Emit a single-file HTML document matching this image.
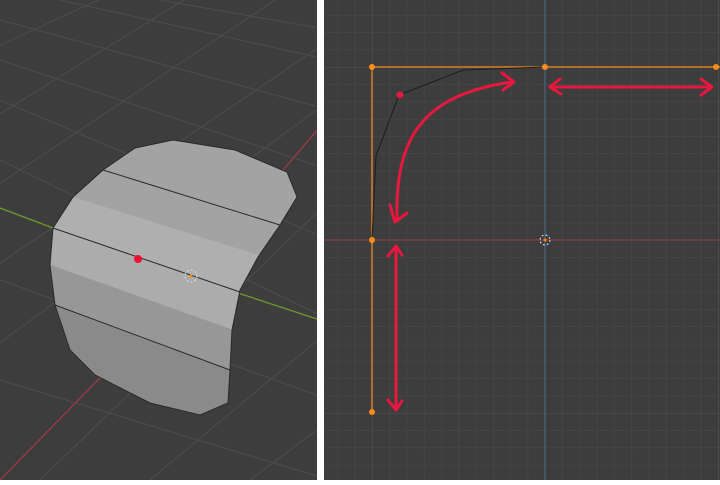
<!DOCTYPE html>
<html><head><style>body{margin:0;width:720px;height:480px;overflow:hidden;background:#fff}</style></head><body>
<svg width="720" height="480" xmlns="http://www.w3.org/2000/svg">
<defs>
<pattern id="mn" x="545" y="240" width="17.3" height="17.3" patternUnits="userSpaceOnUse"><path d="M0 0H17.3M0 0V17.3" stroke="#4a4a4a" stroke-width="1" fill="none"/></pattern>
<pattern id="mj" x="545" y="240" width="173" height="173" patternUnits="userSpaceOnUse"><path d="M0 0H173M0 0V173" stroke="#545454" stroke-width="1" fill="none"/></pattern>
<clipPath id="L"><rect x="0" y="0" width="317" height="480"/></clipPath>
<clipPath id="M"><polygon points="173,140 135,148 103,170 73,197 53,228 50,265 55,305 70,350 95,375 150,403 200,415 228,403 230,370 232,330 240,290 258,257 280,225 297,197 287,172 235,150"/></clipPath>
</defs>
<rect x="0" y="0" width="317" height="480" fill="#3d3d3d"/>
<g clip-path="url(#L)" stroke="#4b4b4b" stroke-width="1.2">
<path d="M-10 50L120 -10M-10 120L200 -10M-10 190L290 -10M-10 270L330 40M-10 350L330 100M40 480L330 200M150 480L330 330M250 480L330 420"/>
<path d="M0 20L330 110M0 60L330 170M0 100L330 240M0 160L330 320M0 280L330 400M0 380L330 480M60 0L330 60M160 0L330 30"/>
<path d="M0 480L140 337M283 170L320 127" stroke="#a23a44" stroke-width="1.3"/>
<path d="M0 208L53 228M238 293L320 320" stroke="#6a9a2a" stroke-width="1.3"/>
<g clip-path="url(#M)" stroke="none">
<rect x="0" y="100" width="320" height="340" fill="#8a8a8a"/>
<polygon points="0,100 320,100 320,274 0,174" fill="#a3a3a3"/>
<polygon points="0,174 320,274 320,320 0,210" fill="#afafaf"/>
<polygon points="0,210 320,320 320,361 0,247" fill="#acacac"/>
<polygon points="0,247 320,361 320,404 0,285" fill="#979797"/>
</g>
<polygon points="173,140 135,148 103,170 73,197 53,228 50,265 55,305 70,350 95,375 150,403 200,415 228,403 230,370 232,330 240,290 258,257 280,225 297,197 287,172 235,150" fill="none" stroke="#2a2a2a" stroke-width="1"/>
<path d="M103 170L280 225M53 228L240 292M55 305L230 370" stroke="#2c2c2c" stroke-width="1"/>
<circle cx="138" cy="259" r="4" fill="#f01030" stroke="none"/>
<circle cx="191" cy="276" r="6" fill="none" stroke="#ddd" stroke-dasharray="2 2" stroke-width="1"/>
<circle cx="191" cy="276" r="1.5" fill="#f80" stroke="none"/>
</g>
<rect x="324" y="0" width="396" height="480" fill="#3d3d3d"/>
<rect x="324" y="0" width="396" height="480" fill="url(#mn)"/>
<rect x="324" y="0" width="396" height="480" fill="url(#mj)"/>
<path d="M324 240H720" stroke="#9a3b45" stroke-width="1"/>
<path d="M545 0V480" stroke="#4a6a94" stroke-width="1"/>
<path d="M372 67H720M372 67V412" stroke="#d77f1f" stroke-width="1.5"/>
<path d="M372 240L376 156L399 95L463 70L545 67" stroke="#1c1c1c" stroke-width="1" fill="none"/>
<g fill="#ff8c1a"><circle cx="372" cy="67" r="3"/><circle cx="545" cy="67" r="3"/><circle cx="716" cy="67" r="3"/><circle cx="372" cy="240" r="3"/><circle cx="372" cy="412" r="3"/></g>
<circle cx="545" cy="240" r="5" fill="none" stroke="#ddd" stroke-dasharray="2 2"/>
<circle cx="545" cy="240" r="1.5" fill="#f80"/>
<g stroke="#e8173d" stroke-width="3" fill="none" stroke-linecap="round" stroke-linejoin="round">
<path d="M397 220C395 140 420 95 512 82"/>
<path d="M502 73L514 82L503 90"/>
<path d="M390 205L395 222L407 213"/>
<path d="M550 87H712M560 79L550 87L561 94M701 79L712 87L701 95"/>
<path d="M396 247V410M388 256L396 246L402 255M388 400L396 410L402 401"/>
</g>
<circle cx="400" cy="95" r="3.5" fill="#e8173d"/>
</svg>
</body></html>
